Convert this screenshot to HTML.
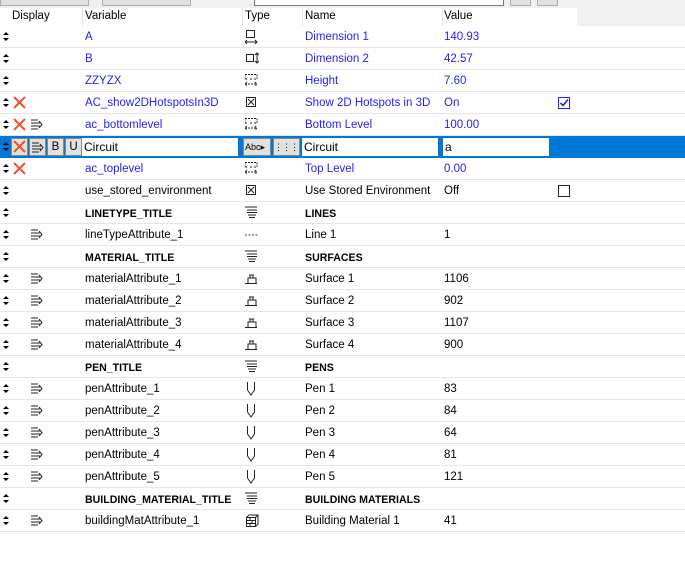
<!DOCTYPE html><html><head><style>
body{margin:0;width:685px;height:573px;background:#fff;font-family:"Liberation Sans",sans-serif;font-size:11.5px;position:relative;overflow:hidden;color:#000}
.a{position:absolute}
.r{position:absolute;left:0;width:685px;height:22px;border-bottom:1px solid #e6e6e6;box-sizing:border-box}
.r span{position:absolute;top:5px;white-space:nowrap}
.b{color:#1f1fff}
.bo{font-weight:bold;font-size:10.6px;top:6px!important}
.s{position:absolute;left:3px;top:6px}
.x{position:absolute;left:13px;top:4px}
.i{position:absolute;left:31px;top:5px}
.t{position:absolute;left:245px;top:4px}
</style></head><body>
<div class="a" style="left:0;top:0;width:685px;height:26px;background:#f0f0f0"></div>
<div class="a" style="left:0;top:-2px;width:87px;height:6px;border:1px solid #adadad;background:#e1e1e1"></div>
<div class="a" style="left:102px;top:-2px;width:87px;height:6px;border:1px solid #adadad;background:#e1e1e1"></div>
<div class="a" style="left:254px;top:-2px;width:248px;height:6px;border:1px solid #7a7a7a;background:#fff"></div>
<div class="a" style="left:510px;top:-2px;width:19px;height:6px;border:1px solid #adadad;background:#e1e1e1"></div>
<div class="a" style="left:537px;top:-2px;width:19px;height:6px;border:1px solid #adadad;background:#e1e1e1"></div>
<div class="a" style="left:0;top:8px;width:577px;height:18px;background:#fff"></div>
<div class="a" style="left:12px;top:10px">Display</div>
<div class="a" style="left:82px;top:8px;height:18px;border-left:1px solid #e5e5e5"></div>
<div class="a" style="left:85px;top:10px">Variable</div>
<div class="a" style="left:242px;top:8px;height:18px;border-left:1px solid #e5e5e5"></div>
<div class="a" style="left:245px;top:10px">Type</div>
<div class="a" style="left:302px;top:8px;height:18px;border-left:1px solid #e5e5e5"></div>
<div class="a" style="left:305px;top:10px">Name</div>
<div class="a" style="left:442px;top:8px;height:18px;border-left:1px solid #e5e5e5"></div>
<div class="a" style="left:444px;top:10px">Value</div>

<svg width="0" height="0" style="position:absolute"><defs>
<g id="srt"><path d="M0 3L3 0L6 3Z M0 6L3 9L6 6Z" fill="#000"/></g>
<g id="xx"><path d="M1 1L12 12M12 1L1 12" stroke="#f0522a" stroke-width="2"/></g>
<g id="ind"><path d="M0 1H7M0 4H9M0 7H9M0 10H7M8 2L11 5.5L8 9" stroke="#222" fill="none" stroke-width="1"/></g>
<g id="dim"><path d="M1.5 .5H9.5V7.5H1.5ZM0 12H12M2 10L0 12L2 14M10 10L12 12L10 14" stroke="#222" fill="none"/></g>
<g id="len"><path d="M0 .5H12M0 .5V5M12 .5V5M0 5H3M5 5H7M9 5H12M0 10H12M2 8L0 10L2 12M10 8L12 10L10 12" stroke="#222" fill="none" stroke-dasharray="2 1"/></g>
<g id="box"><path d="M1.5 1.5H10.5V10.5H1.5ZM3 3L9 9M9 3L3 9" stroke="#222" fill="none"/></g>
<g id="ttl"><path d="M0 1H12M2 4H12M2 6.5H12M3 9H11M4 11.5H10" stroke="#222"/></g>
<g id="pen"><path d="M2.5 0V8L6 13L9.5 8V0" stroke="#222" fill="none"/></g>
<g id="srf"><path d="M0 11.5H12M3 11V6H11V11M5 6V3H8V6M4 3H9" stroke="#222" fill="none"/></g>
</defs></svg>

<div id="rows"></div>
<script>
var B='b',D=[
['A','dim','Dimension 1','140.93',B],
['B','dim2','Dimension 2','42.57',B],
['ZZYZX','len','Height','7.60',B],
['AC_show2DHotspotsIn3D','box','Show 2D Hotspots in 3D','On',B,1,0,'chk'],
['ac_bottomlevel','len','Bottom Level','100.00',B,1,1],
['SEL'],
['ac_toplevel','len','Top Level','0.00',B,1],
['use_stored_environment','box','Use Stored Environment','Off','',0,0,'unchk'],
['LINETYPE_TITLE','ttl','LINES','','bo'],
['lineTypeAttribute_1','line','Line 1','1','',0,1],
['MATERIAL_TITLE','ttl','SURFACES','','bo'],
['materialAttribute_1','srf','Surface 1','1106','',0,1],
['materialAttribute_2','srf','Surface 2','902','',0,1],
['materialAttribute_3','srf','Surface 3','1107','',0,1],
['materialAttribute_4','srf','Surface 4','900','',0,1],
['PEN_TITLE','ttl','PENS','','bo'],
['penAttribute_1','pen','Pen 1','83','',0,1],
['penAttribute_2','pen','Pen 2','84','',0,1],
['penAttribute_3','pen','Pen 3','64','',0,1],
['penAttribute_4','pen','Pen 4','81','',0,1],
['penAttribute_5','pen','Pen 5','121','',0,1],
['BUILDING_MATERIAL_TITLE','ttl','BUILDING MATERIALS','','bo'],
['buildingMatAttribute_1','bm','Building Material 1','41','',0,1]];
var h='';
D.forEach(function(d,i){var y=26+22*i;
if(d[0]=='SEL'){h+='<div class="r" style="top:'+y+'px;background:#0078d7;border:none">'+
'<svg class="s" width="7" height="10" style="left:3px"><use href="#srt"/></svg>'+
'<div class="a" style="left:11px;top:2px;width:15px;height:16px;background:#e1e1e1;border:1px solid #888"><svg width="15" height="16" style="margin:1px"><use href="#xx"/></svg></div>'+
'<div class="a" style="left:29px;top:2px;width:15px;height:16px;background:#e1e1e1;border:1px solid #888"><svg width="13" height="12" style="margin:3px 2px"><use href="#ind"/></svg></div>'+
'<div class="a" style="left:47px;top:2px;width:15px;height:16px;background:#e1e1e1;border:1px solid #888;text-align:center;line-height:16px">B</div>'+
'<div class="a" style="left:65px;top:2px;width:15px;height:16px;background:#e1e1e1;border:1px solid #888;text-align:center;line-height:16px">U</div>'+
'<div class="a" style="left:82px;top:2px;width:156px;height:18px;background:#fff;line-height:18px;padding-left:2px;box-sizing:border-box;font-size:12px">Circuit</div>'+
'<div class="a" style="left:243px;top:2px;width:25px;height:16px;background:#e1e1e1;border:1px solid #888;font-size:9px;line-height:16px;padding-left:1px">Abc&#9656;</div>'+
'<div class="a" style="left:273px;top:2px;width:25px;height:16px;background:#e1e1e1;border:1px solid #888;font-size:9px;line-height:16px;letter-spacing:-1px;text-align:center">&#8942;&#8942;&#8942;&#8942;+</div>'+
'<div class="a" style="left:302px;top:2px;width:136px;height:18px;background:#fff;line-height:18px;padding-left:2px;box-sizing:border-box;font-size:12px">Circuit</div>'+
'<div class="a" style="left:443px;top:2px;width:106px;height:18px;background:#fff;line-height:18px;padding-left:2px;box-sizing:border-box;font-size:12px">a</div></div>';return;}
var ic=d[1],g='';
if(ic=='dim2')g='<svg class="t" width="14" height="14"><path d="M1.5 2.5H8.5V9.5H1.5Z" stroke="#222" fill="none"/><path d="M12 1V11M10 3L12 1L14 3M10 9L12 11L14 9" stroke="#222" fill="none"/></svg>';
else if(ic=='line')g='<svg class="t" width="14" height="14"><path d="M0 7H14" stroke="#444" stroke-dasharray="2 1.5"/></svg>';
else if(ic=='bm')g='<svg class="t" width="14" height="14"><path d="M1.5 3.5H10.5V12.5H1.5ZM1.5 3.5L4 1H13V10L10.5 12.5M10.5 3.5L13 1M1.5 6.5H10.5M1.5 9.5H10.5M5 3.5V6.5M7 6.5V9.5M5 9.5V12.5" stroke="#222" fill="none"/></svg>';
else g='<svg class="t" width="14" height="14"><use href="#'+ic+'"/></svg>';
h+='<div class="r" style="top:'+y+'px"><svg class="s" width="7" height="10"><use href="#srt"/></svg>'+
(d[5]?'<svg class="x" width="14" height="14"><use href="#xx"/></svg>':'')+
(d[6]?'<svg class="i" width="12" height="12"><use href="#ind"/></svg>':'')+
'<span class="'+d[4]+'" style="left:85px">'+d[0]+'</span>'+g+
'<span class="'+d[4]+'" style="left:305px">'+d[2]+'</span>'+
'<span class="'+(d[4]=='b'?'b':'')+'" style="left:444px">'+d[3]+'</span>'+
(d[7]=='chk'?'<svg class="a" style="left:558px;top:5px" width="13" height="13"><rect x=".5" y=".5" width="11" height="11" fill="#fff" stroke="#1f1fff"/><path d="M2.5 6L5 8.5L10 2.5" stroke="#1f1fff" stroke-width="1.6" fill="none"/></svg>':'')+
(d[7]=='unchk'?'<svg class="a" style="left:558px;top:5px" width="13" height="13"><rect x=".5" y=".5" width="11" height="11" fill="#fff" stroke="#222"/></svg>':'')+
'</div>';});
document.getElementById('rows').innerHTML=h;
</script>
</body></html>
